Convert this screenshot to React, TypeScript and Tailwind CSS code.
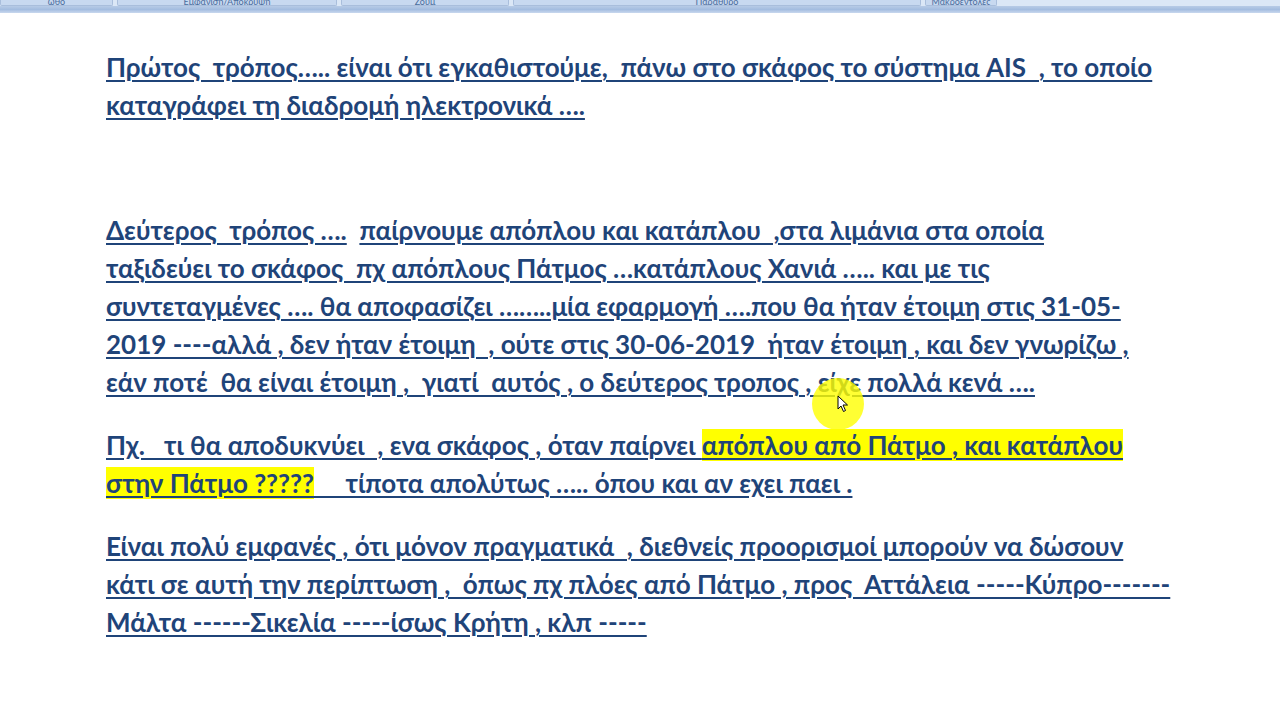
import React from 'react';

const ink = 'text-[#1f4479] underline decoration-[#1f4479] decoration-2 underline-offset-[3px]';

function U({ children }: { children: React.ReactNode }) {
  return <span className={ink}>{children}</span>;
}

function H({ children }: { children: React.ReactNode }) {
  return <span className={`${ink} bg-[#ffff00]`}>{children}</span>;
}

function RibbonStrip() {
  const tabs = [
    { w: 'w-[113px]', label: 'ώθο' },
    { w: 'w-[220px]', label: 'Εμφάνιση/Απόκρυψη' },
    { w: 'w-[168px]', label: 'Ζουμ' },
    { w: 'w-[408px]', label: 'Παράθυρο' },
    { w: 'w-[72px]', label: 'Μακροεντολές' },
  ];
  return (
    <div className="w-full">
      <div className="flex h-[6px] items-end gap-[4px] overflow-hidden bg-[#dbe7f6]">
        {tabs.map((t, i) => (
          <div
            key={i}
            className={`${t.w} flex h-[6px] items-end justify-center overflow-hidden rounded-b-[2px] border-x border-b border-[#a9bedc] bg-[#c8d9f0] text-[9px] leading-[6px] text-[#4a6c9c]`}
          >
            <span>{t.label}</span>
          </div>
        ))}
      </div>
      <div className="h-[7px] bg-gradient-to-b from-[#b7cbe6] via-[#a4bde0] to-[#c9d8ee]" />
    </div>
  );
}

export default function App() {
  return (
    <div
      className="relative h-[720px] w-[1280px] overflow-hidden bg-white"
      style={{ fontFamily: 'Lato, "Open Sans", "Noto Sans", sans-serif' }}
    >
      <RibbonStrip />
      <div className="pl-[106px] pt-[35px] text-[26px] font-bold leading-[38px] text-[#1f4479]">
        <p>
          <U>Πρώτος&nbsp; τρόπος….. είναι ότι εγκαθιστούμε,&nbsp; πάνω στο σκάφος το σύστημα AIS&nbsp; , το οποίο</U>
          <br />
          <U>καταγράφει τη διαδρομή ηλεκτρονικά ….</U>
        </p>
        <div className="h-[87px]" />
        <p>
          <U>Δεύτερος&nbsp; τρόπος ….</U>&nbsp;&nbsp;<U>παίρνουμε απόπλου και κατάπλου&nbsp; ,στα λιμάνια στα οποία</U>
          <br />
          <U>ταξιδεύει το σκάφος&nbsp; πχ απόπλους Πάτμος …κατάπλους Χανιά ….. και με τις</U>
          <br />
          <U>συντεταγμένες …. θα αποφασίζει ……..μία εφαρμογή ….που θα ήταν έτοιμη στις 31-05-</U>
          <br />
          <U>2019 ----αλλά , δεν ήταν έτοιμη&nbsp; , ούτε στις 30-06-2019&nbsp; ήταν έτοιμη , και δεν γνωρίζω ,</U>
          <br />
          <U>εάν ποτέ&nbsp; θα είναι έτοιμη ,&nbsp; γιατί&nbsp; αυτός , ο δεύτερος τροπος , είχε πολλά κενά ….</U>
        </p>
        <div className="h-[25px]" />
        <p>
          <U>Πχ.&nbsp;&nbsp; τι θα αποδυκνύει&nbsp; , ενα σκάφος , όταν παίρνει </U>
          <H>απόπλου από Πάτμο , και κατάπλου</H>
          <br />
          <H>στην Πάτμο ?????</H>
          <U>&nbsp;&nbsp;&nbsp;&nbsp; τίποτα απολύτως ….. όπου και αν εχει παει .</U>
        </p>
        <div className="h-[25px]" />
        <p>
          <U>Είναι πολύ εμφανές , ότι μόνον πραγματικά&nbsp; , διεθνείς προορισμοί μπορούν να δώσουν</U>
          <br />
          <U>κάτι σε αυτή την περίπτωση ,&nbsp; όπως πχ πλόες από Πάτμο , προς&nbsp; Αττάλεια -----Κύπρο-------</U>
          <br />
          <U>Μάλτα ------Σικελία -----ίσως Κρήτη , κλπ -----</U>
        </p>
      </div>

      {/* cursor highlight */}
      <div className="pointer-events-none absolute left-[812px] top-[378px] h-[52px] w-[52px] rounded-full bg-[#ffff00]/80" />
      <svg className="pointer-events-none absolute left-[837px] top-[395px]" width="12" height="18" viewBox="0 0 12 18">
        <path d="M1 1 L1 14 L4 11 L6.5 16.5 L8.5 15.5 L6 10 L10.5 10 Z" fill="#fff" stroke="#000" strokeWidth="1" strokeLinejoin="round" />
      </svg>
    </div>
  );
}
